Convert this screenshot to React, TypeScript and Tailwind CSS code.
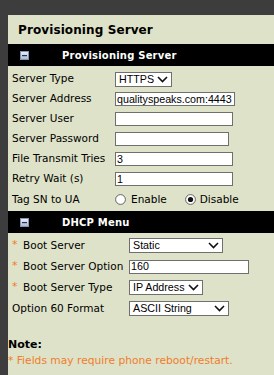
import React from "react";

const Chevron = () => (
  <svg width="11" height="7" viewBox="0 0 11 7" className="shrink-0">
    <path d="M1 1 L5.5 5.5 L10 1" fill="none" stroke="#111" strokeWidth="1.6" />
  </svg>
);

const Minus = () => (
  <svg width="9" height="9" viewBox="0 0 9 9" className="shrink-0">
    <defs>
      <linearGradient id="g" x1="0" y1="0" x2="0" y2="1">
        <stop offset="0" stopColor="#eef2fa" />
        <stop offset="1" stopColor="#a9b8d4" />
      </linearGradient>
    </defs>
    <rect x="0.5" y="0.5" width="8" height="8" fill="url(#g)" stroke="#8592b0" />
    <rect x="2" y="4" width="5" height="1.2" fill="#2a3450" />
  </svg>
);

const Select = ({ value, w }: { value: string; w: string }) => (
  <div
    className={`${w} h-[15px] bg-white border border-[#6f6f6f] flex items-center justify-between pl-[3px] pr-[3px] text-[10.7px] text-black leading-none`}
    style={{ fontFamily: '"Liberation Sans", Arial, sans-serif' }}
  >
    <span>{value}</span>
    <Chevron />
  </div>
);

const Input = ({ value = "", w }: { value?: string; w: string }) => (
  <div
    className={`${w} h-[14px] bg-white border border-[#6f6f6f] flex items-center pl-[1px] text-[10.7px] text-black leading-none overflow-hidden whitespace-nowrap`}
    style={{ fontFamily: '"Liberation Sans", Arial, sans-serif' }}
  >
    {value}
  </div>
);

const Radio = ({ checked }: { checked?: boolean }) => (
  <svg width="11" height="11" viewBox="0 0 11 11" className="shrink-0">
    <circle cx="5.5" cy="5.5" r="4.9" fill="white" stroke="#555" strokeWidth="0.9" />
    {checked && <circle cx="5.5" cy="5.5" r="2.6" fill="#111" />}
  </svg>
);

const Bar = ({ title }: { title: string }) => (
  <div className="h-[22px] bg-black flex items-center pl-[12px]">
    <Minus />
    <span className="ml-[33px] text-white font-bold text-[10px] tracking-[0.2px]">{title}</span>
  </div>
);

const Row = ({ label, children, h = "h-[20px]", star }: { label: string; children: React.ReactNode; h?: string; star?: boolean }) => (
  <div className={`${h} flex items-center`}>
    <div className={`${star ? "w-[117px]" : "w-[103px]"} flex items-center shrink-0 whitespace-nowrap`}>
      {star && <span className="text-[#f07d2c] w-[11px] text-[11px]">*</span>}
      <span>{label}</span>
    </div>
    {children}
  </div>
);

export default function App() {
  return (
    <div
      className="w-[274px] h-[375px] bg-[#3d3d3d] pt-[15px] pl-[8px] overflow-hidden"
      style={{ fontFamily: '"DejaVu Sans", Verdana, sans-serif' }}
    >
      <div className="bg-[#dee2c8] h-[360px] text-[10.5px] text-black">
        <div className="h-[29px] flex items-center pl-[10px] font-bold text-[12px] tracking-[0.1px]">
          Provisioning Server
        </div>
        <Bar title="Provisioning Server" />
        <div className="pl-[4px] pt-[3px] pb-[1px]">
          <Row label="Server Type"><Select value="HTTPS" w="w-[57px]" /></Row>
          <Row label="Server Address"><Input value="qualityspeaks.com:4443" w="w-[120px]" /></Row>
          <Row label="Server User"><Input w="w-[118px]" /></Row>
          <Row label="Server Password"><Input w="w-[114px]" /></Row>
          <Row label="File Transmit Tries"><Input value="3" w="w-[118px]" /></Row>
          <Row label="Retry Wait (s)"><Input value="1" w="w-[118px]" /></Row>
          <Row label="Tag SN to UA" h="h-[21px]">
            <div className="flex items-center">
              <Radio />
              <span className="ml-[5px]">Enable</span>
              <span className="ml-[18px] flex"><Radio checked /></span>
              <span className="ml-[4px]">Disable</span>
            </div>
          </Row>
        </div>
        <Bar title="DHCP Menu" />
        <div className="pl-[4px] pt-[2px]">
          <Row label="Boot Server" star h="h-[21px]"><Select value="Static" w="w-[94px]" /></Row>
          <Row label="Boot Server Option" star h="h-[21px]"><Input value="160" w="w-[120px]" /></Row>
          <Row label="Boot Server Type" star h="h-[21px]"><Select value="IP Address" w="w-[74px]" /></Row>
          <Row label="Option 60 Format" h="h-[21px]">
            <div className="w-[14px]" />
            <Select value="ASCII String" w="w-[100px]" />
          </Row>
        </div>
        <div className="mt-[19px] font-bold leading-[13px] text-[11px]">Note:</div>
        <div className="mt-[3px] text-[#f07d2c] leading-[13px] text-[10.7px]">* Fields may require phone reboot/restart.</div>
      </div>
    </div>
  );
}
